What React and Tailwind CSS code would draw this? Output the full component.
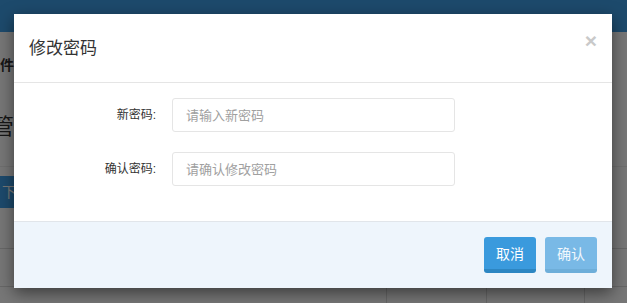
import React from "react";

const font = { fontFamily: '"Liberation Sans", "Noto Sans CJK SC", sans-serif' };

const FormRow = ({ label, placeholder }) => (
  <div className="flex items-center">
    <label className="w-[143px] pr-px text-right text-[12px] text-[#333]">{label}:</label>
    <input
      type="password"
      placeholder={placeholder}
      className="ml-[15px] h-[34px] w-[283px] rounded-[3px] border border-[#e5e5e5] bg-white px-[13px] text-[13px] text-[#333] outline-none placeholder:text-[#a0a0a0]"
    />
  </div>
);

const App = () => {
  return (
    <div className="relative h-[303px] w-[627px] overflow-hidden bg-white" style={font}>
      {/* page behind the dialog */}
      <div className="h-8 bg-[#3e9fe8]" />
      <div className="text-[#333]">
        <div className="-ml-[14px] mt-[26px] text-[14px] font-bold leading-none">组件管理</div>
        <div className="-ml-[8px] mt-[44px] text-[22px] leading-none">管理</div>
        <div className="mt-[28px] border-t border-[#eee]" />
        <div className="mt-[9px] flex h-[32px] w-[60px] items-center bg-[#3e9fe8] pl-[2px] text-[14px] text-white">下载</div>
        <div className="mt-[40px] border-t border-[#ddd]" />
        <div className="mt-[37px] grid h-[30px] grid-cols-[387px_100px_98px_1fr] border-t border-[#ddd]">
          <div className="border-r border-[#ddd]" />
          <div className="border-r border-[#ddd]" />
          <div className="border-r border-[#ddd]" />
          <div />
        </div>
      </div>

      {/* overlay */}
      <div className="absolute inset-0 bg-black/[0.535]" />

      {/* dialog */}
      <div className="absolute left-[14px] top-[14px] flex w-[598px] flex-col bg-white shadow-[0_5px_15px_rgba(0,0,0,0.5)]">
        <div className="flex h-[69px] items-start justify-between border-b border-[#e5e5e5] px-[15px]">
          <h4 className="mt-[23px] text-[17px] leading-6 text-[#333]">修改密码</h4>
          <button className="mt-[15px] text-[21px] font-bold leading-6 text-[#c9c9c9]">×</button>
        </div>
        <div className="flex flex-col gap-[20px] pb-[35px] pt-[15px]">
          <FormRow label="新密码" placeholder="请输入新密码" />
          <FormRow label="确认密码" placeholder="请确认修改密码" />
        </div>
        <div className="flex h-[67px] items-start justify-end gap-[9px] border-t border-[#e1e5ea] bg-[#eef5fc] pr-[15px] pt-[15px]">
          <button className="h-[36px] w-[52px] rounded-[3px] border-b-[4px] border-[#2d86c2] bg-[#3a9add] pt-[2px] text-[14px] text-white">
            取消
          </button>
          <button className="h-[36px] w-[52px] rounded-[3px] border-b-[4px] border-[#6eaed9] bg-[#79b9e6] pt-[2px] text-[14px] text-white/90">
            确认
          </button>
        </div>
      </div>
    </div>
  );
};

export default App;
